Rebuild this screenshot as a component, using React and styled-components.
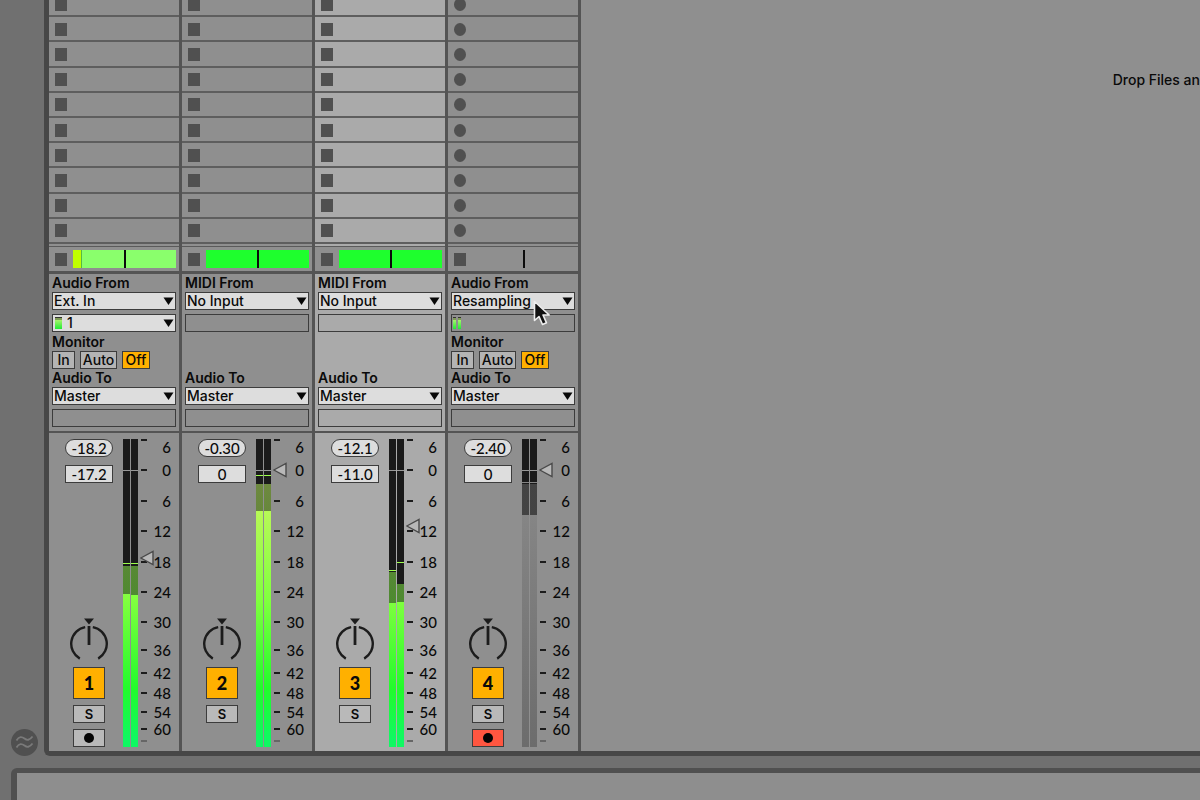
import React from 'react';
import styled, { createGlobalStyle } from 'styled-components';

const GlobalStyle = createGlobalStyle`
  * {
    box-sizing: border-box;
  }
  body {
    margin: 0;
    overflow: hidden;
    background: #707070;
    color: #0a0a0a;
    font-family: Inter, 'Liberation Sans', sans-serif;
    font-size: 14px;
    font-weight: 500;
  }
  button, select, input {
    margin: 0;
    padding: 0;
    border-radius: 0;
    color: inherit;
    font: inherit;
  }
`;

const Page = styled.div`
  display: flex;
  flex-direction: column;
  min-height: 100vh;
`;

const Workspace = styled.div`
  display: flex;
`;

const Rail = styled.aside`
  display: flex;
  align-items: flex-end;
  justify-content: flex-end;
  width: 44px;
  padding-right: 6px;
`;

const RailButton = styled.button`
  width: 27px;
  height: 27px;
  border: 0;
  background: none;

  svg {
    display: block;
  }
`;

const Session = styled.main`
  display: flex;
  flex: 1;
  border: solid #474747;
  border-width: 0 0 5px 5px;
  border-bottom-left-radius: 6px;
  background: #8f8f8f;
`;

const DropArea = styled.div`
  flex: 1;
  padding-top: 71px;
  text-align: right;
  line-height: 18px;
  white-space: nowrap;
`;

const Detail = styled.section`
  flex: 1;
  min-height: 32px;
  margin: 12px 0 0 11px;
  border: solid #505050;
  border-width: 5px 0 0 6px;
  border-top-left-radius: 6px;
  background: #8e8e8e;
`;

const Column = styled.section`
  width: 133px;
  border-right: 3px solid #545454;
  background: ${({ $selected }) => ($selected ? '#aaaaaa' : '#8f8f8f')};
`;

const Slots = styled.div`
  display: flex;
  flex-direction: column;
  justify-content: flex-end;
  height: 244px;
  overflow: hidden;
`;

const SlotList = styled.div`
  display: grid;
  flex: none;
  grid-template-rows: repeat(10, 1fr);
  height: 252px;
`;

const Slot = styled.div`
  display: flex;
  align-items: center;
  padding: 1px 0 0 6px;
  border-bottom: 2px solid #5e5e5e;
`;

const StopButton = styled.button`
  flex: none;
  width: 12px;
  height: 13px;
  border: 0;
  border-radius: ${({ $round }) => ($round ? '50%' : '0')};
  background: #505050;
`;

const Status = styled.div`
  display: flex;
  align-items: center;
  gap: 6px;
  height: 28px;
  margin-top: 2px;
  padding: 0 3px 0 6px;
  border-top: 1px solid #5a5a5a;
  border-bottom: 3px solid #545454;
  background: #8f8f8f;
`;

const Progress = styled.div`
  display: flex;
  flex: 1;
  justify-content: center;
  height: 18px;
  background: ${({ $fill }) => $fill};
`;

const Playhead = styled.span`
  width: 2px;
  background: #0c0c0c;
`;

const Routing = styled.div`
  display: flex;
  flex-direction: column;
  height: 159px;
  padding: 0 3px;
  border-bottom: 2px solid #545454;
`;

const RouteLabel = styled.label`
  height: 18px;
  font-weight: 600;
  line-height: 18px;
`;

const MonitorLabel = styled.div`
  height: 19px;
  font-weight: 600;
  line-height: 19px;
`;

const SelectBox = styled.div`
  position: relative;
  display: grid;
  align-items: center;
  height: 18px;
  margin-bottom: ${({ $gap }) => $gap}px;

  > * {
    grid-area: 1 / 1;
  }
`;

const Select = styled.select`
  appearance: none;
  width: 100%;
  height: 18px;
  padding-left: ${({ $indent }) => ($indent ? '14px' : '1px')};
  border: 1px solid #3c3c3c;
  outline: 0;
  background: #dddddd;
  line-height: 16px;
`;

const Arrow = styled.svg`
  justify-self: end;
  margin-right: 2px;
  pointer-events: none;
`;

const Cursor = styled.svg`
  position: absolute;
  top: 8px;
  left: 82px;
  z-index: 2;
  pointer-events: none;
`;

const Chip = styled.span`
  display: flex;
  gap: 2px;
  margin-left: ${({ $inset }) => $inset}px;
  pointer-events: none;
`;

const ChipBar = styled.span`
  width: ${({ $wide }) => ($wide ? '7px' : '3px')};
  height: 12px;
  border-top: 1px solid #333;
  background: linear-gradient(#7f9c56 2px, #a6f46c 2px, #22ec34);
`;

const EmptyBox = styled.div`
  display: flex;
  flex: none;
  align-items: center;
  height: 18px;
  border: 1px solid #3c3c3c;
`;

const MonitorRow = styled.div`
  display: flex;
  gap: 5px;
  height: 18px;
  visibility: ${({ $hidden }) => ($hidden ? 'hidden' : 'visible')};
`;

const Toggle = styled.button`
  height: 18px;
  width: ${({ $width }) => $width}px;
  border: 1px solid #3c3c3c;
  background: ${({ $on }) => ($on ? '#ffb000' : '#b4b4b4')};
  line-height: 16px;
  text-align: center;
`;

const Mixer = styled.div`
  display: flex;
  height: 318px;
  padding: 6px 0 4px 16px;
`;

const Controls = styled.div`
  display: flex;
  flex-direction: column;
  align-items: center;
  width: 48px;
  margin-right: 10px;
  font-family: Lato, 'Liberation Sans', sans-serif;
`;

const Peak = styled.output`
  width: 48px;
  height: 18px;
  border: 1px solid #3c3c3c;
  border-radius: 9px;
  background: #dddddd;
  font-size: 15px;
  line-height: 16px;
  text-align: center;
`;

const Volume = styled.input`
  width: 48px;
  height: 18px;
  margin-top: 8px;
  border: 1px solid #3c3c3c;
  outline: 0;
  background: #dddddd;
  font-size: 15px;
  text-align: center;
`;

const Knob = styled.svg`
  flex: none;
  margin-top: auto;
`;

const Activator = styled.button`
  flex: none;
  width: 32px;
  height: 32px;
  margin-top: 6px;
  border: 1px solid #3c3c3c;
  background: #ffb000;
  font-size: 18px;
  font-weight: 900;
  line-height: 30px;
`;

const SmallButton = styled.button`
  display: grid;
  flex: none;
  place-items: center;
  width: 32px;
  height: 18px;
  margin-top: 6px;
  border: 1px solid #3c3c3c;
  background: ${({ $armed }) => ($armed ? '#ff5640' : '#b9b9b9')};
  font-family: Inter, sans-serif;
  font-size: 13px;
  font-weight: 600;
  line-height: 16px;
  visibility: ${({ $hidden }) => ($hidden ? 'hidden' : 'visible')};
`;

const Dot = styled.span`
  width: 10px;
  height: 10px;
  border-radius: 50%;
  background: #050505;
`;

const Meter = styled.div`
  display: flex;
  gap: 1px;
  height: 308px;
`;

const MeterBar = styled.div`
  width: 7px;
`;

const Scale = styled.div`
  position: relative;
  display: flex;
  flex-direction: column;
  width: 30px;
  margin-left: 3px;
  font-family: Lato, 'Liberation Sans', sans-serif;
  font-size: 15px;
`;

const Mark = styled.div`
  display: flex;
  align-items: center;
  justify-content: space-between;
  height: ${({ $height }) => $height}px;
  line-height: 16px;
`;

const Tick = styled.span`
  width: 6px;
  height: 2px;
  align-self: ${({ $top }) => ($top ? 'flex-start' : 'center')};
  background: ${({ $faint }) => ($faint ? '#666' : '#1c1c1c')};
`;

const Fader = styled.svg`
  position: absolute;
  left: -1px;
`;

// decibel label and the height of its band on the scale
const marks = [
  ['6', 15],
  ['0', 31],
  ['6', 31],
  ['12', 30],
  ['18', 31],
  ['24', 29],
  ['30', 31],
  ['36', 25],
  ['42', 21],
  ['48', 20],
  ['54', 18],
  ['60', 16],
  ['', 8],
];

const tracks = [
  {
    id: 1,
    from: 'Audio From',
    input: 'Ext. In',
    channel: '1',
    monitor: true,
    peak: '-18.2',
    volume: '-17.2',
    fader: 119,
    bars: [
      { hold: 124, dim: 127, level: 155 },
      { hold: 124, dim: 127, level: 156 },
    ],
    clip: 'linear-gradient(90deg, #c0ff00 8px, #55b848 8px, #55b848 9px, #8aff6c 9px)',
    arm: true,
  },
  {
    id: 2,
    from: 'MIDI From',
    input: 'No Input',
    peak: '-0.30',
    volume: '0',
    fader: 31,
    bars: [
      { hold: 36, dim: 45, level: 72 },
      { hold: 36, dim: 45, level: 72 },
    ],
    clip: '#1eff2d',
  },
  {
    id: 3,
    from: 'MIDI From',
    input: 'No Input',
    selected: true,
    peak: '-12.1',
    volume: '-11.0',
    fader: 87,
    bars: [
      { hold: 131, dim: 133, level: 164 },
      { hold: 123, dim: 145, level: 163 },
    ],
    clip: '#1eff2d',
  },
  {
    id: 4,
    from: 'Audio From',
    input: 'Resampling',
    monitor: true,
    resampling: true,
    peak: '-2.40',
    volume: '0',
    fader: 31,
    bars: [
      { hold: 43, dim: 45, level: 76 },
      { hold: 43, dim: 45, level: 76 },
    ],
    clip: 'none',
    arm: true,
    armed: true,
  },
];

const meterBackground = ({ hold, dim, level }, muted) => {
  const holdColor = muted ? '#858585' : '#9cff4a';
  const dimColor = muted ? 'rgba(20, 20, 20, 0.58)' : 'rgba(30, 30, 35, 0.52)';
  const top = `linear-gradient(#1a1a1a 31px, #999 31px, #999 32px, #1a1a1a 32px, #1a1a1a ${hold}px, ${holdColor} ${hold}px, ${holdColor} ${hold + 1}px, #1a1a1a ${hold + 1}px, #1a1a1a ${dim}px, ${dimColor} ${dim}px, ${dimColor} ${level}px, transparent ${level}px)`;
  const fill = muted
    ? 'linear-gradient(#858585 76px, #6c6c6c)'
    : 'linear-gradient(#c8ff60 40px, #b3f855 80px, #82ff3f 160px, #22fb2c 250px, #10f862 300px)';
  return `${top}, ${fill}`;
};

const Dropdown = ({ id, label, value, gap = 0, wide, children }) => (
  <SelectBox $gap={gap}>
    <Select id={id} aria-label={label} defaultValue={value} $indent={wide}>
      <option>{value}</option>
    </Select>
    {wide && (
      <Chip $inset={3}>
        <ChipBar $wide />
      </Chip>
    )}
    <Arrow width="11" height="8" viewBox="0 0 11 8">
      <path d="M0.500 0.5H10.500L5.500 8Z" fill="#080808" />
    </Arrow>
    {children}
  </SelectBox>
);

const MousePointer = () => (
  <Cursor width="18" height="28" viewBox="0 0 18 28">
    <path
      d="M1.5 1.5V20.5L6 16.5L9.5 24.5L13.5 22.8L10 15H16.2Z"
      fill="#111"
      stroke="#eee"
      strokeWidth="1.6"
      strokeLinejoin="round"
    />
  </Cursor>
);

const TrackRouting = ({ track }) => (
  <Routing>
    <RouteLabel htmlFor={`from-${track.id}`}>{track.from}</RouteLabel>
    <Dropdown id={`from-${track.id}`} value={track.input} gap={4}>
      {track.resampling && <MousePointer />}
    </Dropdown>
    {track.channel ? (
      <Dropdown label="Input channel" value={track.channel} wide />
    ) : (
      <EmptyBox>
        {track.resampling && (
          <Chip $inset={1}>
            <ChipBar />
            <ChipBar />
          </Chip>
        )}
      </EmptyBox>
    )}
    <MonitorLabel>{track.monitor && 'Monitor'}</MonitorLabel>
    <MonitorRow $hidden={!track.monitor}>
      {track.monitor && (
        <>
          <Toggle $width={23}>In</Toggle>
          <Toggle $width={37}>Auto</Toggle>
          <Toggle $width={28} $on>
            Off
          </Toggle>
        </>
      )}
    </MonitorRow>
    <RouteLabel htmlFor={`to-${track.id}`}>Audio To</RouteLabel>
    <Dropdown id={`to-${track.id}`} value="Master" gap={4} />
    <EmptyBox />
  </Routing>
);

const TrackMixer = ({ track }) => (
  <Mixer>
    <Controls>
      <Peak aria-label="Peak level">{track.peak}</Peak>
      <Volume aria-label="Track volume" defaultValue={track.volume} />
      <Knob width="38" height="43" viewBox="0 0 38 43" fill="none">
        <path d="M14 0.5H24L19 6.5Z" fill="#1c1c1c" />
        <path
          d="M9.8 40.6A17 17 0 0 1 15.2 9.1M22.8 9.1A17 17 0 0 1 28.2 40.6"
          stroke="#1c1c1c"
          strokeWidth="2.4"
        />
        <path d="M19 8V27" stroke="#1c1c1c" strokeWidth="2.8" />
      </Knob>
      <Activator>{track.id}</Activator>
      <SmallButton aria-label="Solo">S</SmallButton>
      <SmallButton aria-label="Arm" $hidden={!track.arm} $armed={track.armed}>
        <Dot />
      </SmallButton>
    </Controls>
    <Meter>
      {track.bars.map((bar, i) => (
        <MeterBar key={i} style={{ background: meterBackground(bar, track.armed) }} />
      ))}
    </Meter>
    <Scale>
      {marks.map(([label, height], i) => (
        <Mark key={i} $height={height}>
          <Tick $top={i === 0} $faint={label === ''} />
          {label}
        </Mark>
      ))}
      <Fader width="14" height="16" viewBox="0 0 14 16" style={{ top: track.fader - 8 }}>
        <path d="M0.8 8L13 1.5V14.5Z" fill="#b8b8b8" stroke="#4a4a4a" strokeWidth="1.4" />
      </Fader>
    </Scale>
  </Mixer>
);

const Track = ({ track }) => (
  <Column $selected={track.selected}>
    <Slots>
      <SlotList>
        {Array.from({ length: 10 }, (_, i) => (
          <Slot key={i}>
            <StopButton aria-label="Slot" $round={track.armed} />
          </Slot>
        ))}
      </SlotList>
    </Slots>
    <Status>
      <StopButton aria-label="Stop clips" />
      <Progress $fill={track.clip}>
        <Playhead />
      </Progress>
    </Status>
    <TrackRouting track={track} />
    <TrackMixer track={track} />
  </Column>
);

const App = () => (
  <Page>
    <GlobalStyle />
    <Workspace>
      <Rail>
        <RailButton aria-label="Groove pool">
          <svg width="27" height="27" viewBox="0 0 27 27" fill="none">
            <circle cx="13.5" cy="13.5" r="13.5" fill="#505050" />
            <path
              d="M5.500 11.500C8 7 11 7.500 13.500 9.500S18.500 11.500 21.500 7.500M5.500 18.500C8 14 11 14.500 13.500 16.500S18.500 18.500 21.500 14.500"
              stroke="#7a7a7a"
              strokeWidth="1.8"
            />
          </svg>
        </RailButton>
      </Rail>
      <Session>
        {tracks.map((track) => (
          <Track key={track.id} track={track} />
        ))}
        <DropArea>Drop Files an</DropArea>
      </Session>
    </Workspace>
    <Detail />
  </Page>
);

export default App;
